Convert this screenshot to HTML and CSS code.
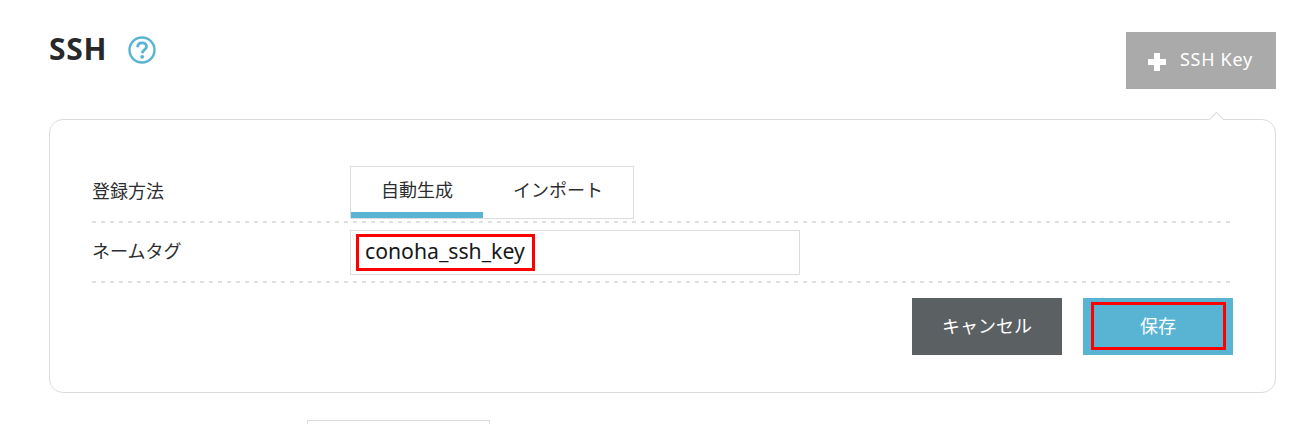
FILE: index.html
```html
<!DOCTYPE html>
<html lang="ja">
<head>
<meta charset="utf-8">
<title>SSH</title>
<link rel="stylesheet" href="styles.css">
</head>
<body>
<main class="page">
  <header class="head">
    <div class="title-wrap">
      <h1 class="title">SSH</h1>
      <svg class="help" width="28" height="28" viewBox="0 0 28 28" aria-hidden="true">
        <circle cx="14" cy="14" r="12.5" fill="none" stroke="#59b4d4" stroke-width="2.4"/>
        <path d="M9.6 11.2c0-2.8 1.9-4.4 4.5-4.4s4.4 1.6 4.4 3.8c0 3.3-4.3 3.3-4.3 6.6" fill="none" stroke="#59b4d4" stroke-width="2.8"/>
        <circle cx="14.2" cy="20.8" r="1.9" fill="#59b4d4"/>
      </svg>
    </div>
    <button class="add-btn" type="button">
      <svg class="plus" width="20" height="20" viewBox="0 0 20 20" aria-hidden="true"><path d="M7 1h6v6h6v6h-6v6H7v-6H1V7h6z" fill="#fff"/></svg>
      <span class="add-text">SSH Key</span>
    </button>
  </header>
  <section class="panel">
    <span class="arrow"></span>
    <div class="row row-method">
      <div class="label">登録方法</div>
      <div class="tabs">
        <div class="tab active">自動生成</div>
        <div class="tab">インポート</div>
      </div>
    </div>
    <div class="row row-name">
      <div class="label">ネームタグ</div>
      <div class="input">
        <span class="value">conoha_ssh_key</span>
        <span class="mark mark-input"></span>
      </div>
    </div>
    <div class="actions">
      <button class="btn btn-cancel" type="button">キャンセル</button>
      <button class="btn btn-save" type="button">保存<span class="mark mark-save"></span></button>
    </div>
  </section>
  <div class="below"></div>
</main>
</body>
</html>
```
FILE: styles.css
```css
* { box-sizing: border-box; }
html, body { margin: 0; height: 424px; overflow: hidden; background: #fff; }
body { font-family: "Noto Sans", "Noto Sans CJK JP", sans-serif; color: #2b2e30; }
.page { padding: 32px 33px 0 49px; }
.head { display: flex; justify-content: space-between; align-items: flex-start; height: 57px; }
.title-wrap { display: flex; align-items: center; gap: 22px; height: 36px; }
.title { margin: 0 0 2px; width: 57px; font-size: 30px; letter-spacing: 0.7px; font-weight: 700; line-height: 34px; color: #26282a; white-space: nowrap; }
.help { display: block; }
.add-btn { display: flex; align-items: center; gap: 13px; width: 150px; height: 57px; border: 0; padding: 0 0 0 21px; background: #aaa; color: #fff; font: inherit; font-size: 18px; letter-spacing: 0.7px; }
.add-text { padding-bottom: 3px; }
.plus { margin-top: 3px; }
.panel { position: relative; margin-top: 30px; height: 274px; padding: 46px 45px 0 42px; background: #fff; border: 1px solid #dcdcdc; border-radius: 14px; }
.arrow { position: absolute; top: -6px; right: 53px; width: 11px; height: 11px; background: #fff; border-top: 1px solid #dcdcdc; border-left: 1px solid #dcdcdc; transform: rotate(45deg); }
.row { display: flex; padding-bottom: 2px; background: repeating-linear-gradient(90deg, #e0e0e0 0 4px, transparent 4px 9px) left bottom / 100% 2px no-repeat; }
.row-method { height: 57px; }
.row-name { height: 60px; padding-top: 7px; }
.label { width: 258px; font-size: 18px; line-height: 24px; }
.row-method .label { padding-top: 13px; }
.row-name .label { padding-top: 9px; }
.tabs { display: flex; width: 284px; height: 53px; border: 1px solid #dcdcdc; }
.tab { display: flex; align-items: center; justify-content: center; padding-bottom: 8px; font-size: 18px; }
.tab.active { flex: 0 0 132px; box-shadow: inset 0 -6px 0 #59b4d4; }
.tab:not(.active) { flex: 1; }
.input { position: relative; width: 450px; height: 45px; border: 1px solid #dcdcdc; padding: 0 14px; font-size: 21.2px; line-height: 40px; color: #16181a; }
.mark { position: absolute; border: 3px solid #f00; }
.mark-input { left: 5px; top: 3px; width: 179px; height: 37px; }
.actions { display: flex; justify-content: flex-end; gap: 21px; margin-top: 15px; margin-right: -3px; }
.btn { position: relative; width: 150px; height: 57px; border: 0; padding: 0 0 4px; color: #fff; font: inherit; font-size: 18px; }
.btn-cancel { background: #5b6063; }
.btn-save { background: #59b4d4; }
.mark-save { left: 8px; top: 4px; width: 135px; height: 48px; }
.below { width: 183px; height: 10px; margin: 27px 0 0 258px; border: 1px solid #dcdcdc; }
```
